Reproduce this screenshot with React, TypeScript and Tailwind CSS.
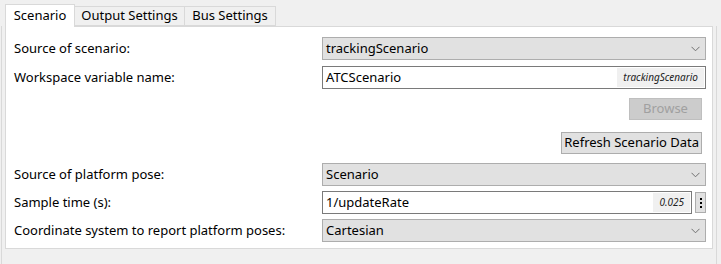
const font = { fontFamily: '"Noto Sans", "Open Sans", sans-serif' };

function Chevron() {
  return (
    <svg width="9" height="6" viewBox="0 0 9 6" fill="none" className="text-[#707070]">
      <path d="M0.5 0.8 L4.5 4.8 L8.5 0.8" stroke="currentColor" strokeWidth="1" />
    </svg>
  );
}

function Dropdown({ value }: { value: string }) {
  return (
    <div className="flex h-[23px] items-center justify-between border border-[#adadad] bg-[#e1e1e1] pl-[3px] pr-[5px] text-[13px] text-black">
      <span>{value}</span>
      <Chevron />
    </div>
  );
}

function Field({ value, hint }: { value: string; hint: string }) {
  return (
    <div className="flex h-[23px] flex-1 items-center justify-between border border-[#7a7a7a] bg-white pl-[3px] pr-px text-[13px] text-black">
      <span>{value}</span>
      <span className="flex h-[19px] items-center bg-[#f0f0f0] px-[6px] text-[10px] italic text-[#222]">{hint}</span>
    </div>
  );
}

export default function App() {
  return (
    <div className="h-[264px] w-[721px] bg-[#f0f0f0] pl-[1px] pr-[4px]" style={font}>
      <div className="flex h-[27px] items-end pl-[4px] text-[13px] text-black">
        <div className="relative z-10 flex h-[23px] w-[70px] items-center justify-center border border-b-0 border-[#d9d9d9] bg-white">
          Scenario
        </div>
        <div className="mb-px flex h-[20px] w-[110px] items-center justify-center border border-l-0 border-[#d9d9d9] bg-[#f0f0f0]">
          Output Settings
        </div>
        <div className="mb-px flex h-[20px] w-[91px] items-center justify-center border border-l-0 border-[#d9d9d9] bg-[#f0f0f0]">
          Bus Settings
        </div>
      </div>
      <div className="-mt-px flex h-[238px] flex-col border-x border-[#d9d9d9] px-[3px]">
        <div className="border border-[#d9d9d9] bg-white pb-[6px] pl-[8px] pr-[6px] pt-[10px] text-[13px] text-black">
          <div className="grid grid-cols-[308px_1fr] items-center">
            <span>Source of scenario:</span>
            <Dropdown value="trackingScenario" />
          </div>
          <div className="mt-[6px] grid grid-cols-[308px_1fr] items-center">
            <span>Workspace variable name:</span>
            <Field value="ATCScenario" hint="trackingScenario" />
          </div>
          <div className="mt-[9px] flex justify-end pr-[4px]">
            <div className="flex h-[22px] w-[73px] items-center justify-center border border-[#bfbfbf] bg-[#cccccc] text-[#a0a0a0]">
              Browse
            </div>
          </div>
          <div className="mt-[12px] flex justify-end pr-[4px]">
            <div className="flex h-[22px] items-center justify-center border border-[#adadad] bg-[#e1e1e1] px-[2px]">
              Refresh Scenario Data
            </div>
          </div>
          <div className="mt-[9px] grid grid-cols-[308px_1fr] items-center">
            <span>Source of platform pose:</span>
            <Dropdown value="Scenario" />
          </div>
          <div className="mt-[5px] grid grid-cols-[308px_1fr] items-center">
            <span>Sample time (s):</span>
            <div className="flex items-center gap-[3px]">
              <Field value="1/updateRate" hint="0.025" />
              <div className="flex h-[21px] w-[11px] flex-col items-center justify-center gap-[2px] border border-[#adadad] bg-[#e1e1e1]">
                <span className="size-[2px] bg-black" />
                <span className="size-[2px] bg-black" />
                <span className="size-[2px] bg-black" />
              </div>
            </div>
          </div>
          <div className="mt-[5px] grid grid-cols-[308px_1fr] items-center">
            <span>Coordinate system to report platform poses:</span>
            <Dropdown value="Cartesian" />
          </div>
        </div>
      </div>
    </div>
  );
}
